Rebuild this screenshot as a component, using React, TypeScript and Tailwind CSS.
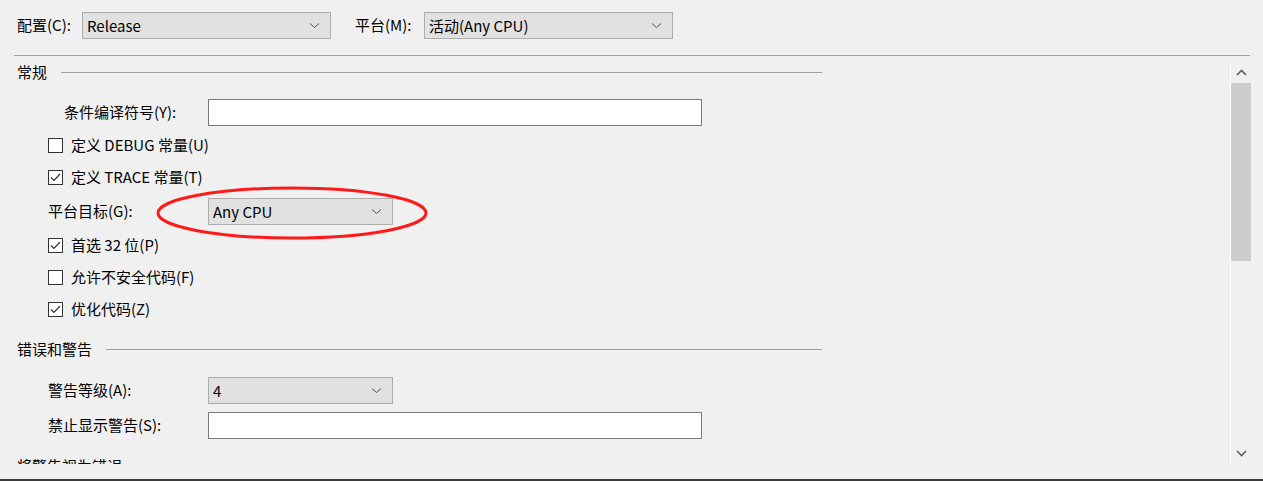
import React from "react";

const font = { fontFamily: '"Segoe UI", "Noto Sans CJK SC", sans-serif' };

const Chevron = () => (
  <svg width="11" height="7" viewBox="0 0 11 7" className="shrink-0">
    <path d="M1 1.5 L5.5 5.5 L10 1.5" fill="none" stroke="#505050" strokeWidth="1" />
  </svg>
);

const Combo = ({ value, width }: { value: string; width: string }) => (
  <div className={`${width} h-[27px] flex items-center justify-between bg-[#e1e1e1] border border-[#adadad] pl-[4px] pr-[10px]`}>
    <span className="text-[15px] text-black leading-none">{value}</span>
    <Chevron />
  </div>
);

const TextBox = () => <div className="w-[494px] h-[27px] bg-white border border-[#7a7a7a]" />;

const CheckRow = ({ label, checked }: { label: string; checked?: boolean }) => (
  <div className="h-[32px] flex items-center pl-[48px] gap-[8px]">
    <div className="w-[15px] h-[15px] bg-white border border-[#333333] flex items-center justify-center">
      {checked && (
        <svg width="11" height="9" viewBox="0 0 11 9">
          <path d="M1 4.5 L4 7.5 L10 1" fill="none" stroke="#333333" strokeWidth="1.2" />
        </svg>
      )}
    </div>
    <span className="text-[15px] text-black">{label}</span>
  </div>
);

const SectionHeader = ({ title }: { title: string }) => (
  <div className="h-[20px] flex items-center pl-[17px] w-[822px]">
    <span className="text-[15px] text-black whitespace-nowrap">{title}</span>
    <div className="flex-1 h-px bg-[#a0a0a0] ml-[14px]" />
  </div>
);

export default function App() {
  return (
    <div className="w-[1263px] h-[481px] bg-[#f0f0f0] flex flex-col overflow-hidden relative" style={font}>
      {/* top config bar */}
      <div className="flex items-center pt-[12px] pl-[17px] h-[27px] box-content">
        <span className="text-[15px] text-black w-[65px]">配置(C):</span>
        <Combo value="Release" width="w-[249px]" />
        <span className="text-[15px] text-black ml-[24px] w-[69px]">平台(M):</span>
        <Combo value="活动(Any CPU)" width="w-[249px]" />
      </div>
      <div className="ml-[14px] mt-[16px] w-[1236px] h-px bg-[#a0a0a0]" />

      <div className="flex mt-[6px] h-[402px]">
        {/* scroll content */}
        <div className="w-[1230px] h-full overflow-hidden relative flex flex-col">
          <SectionHeader title="常规" />
          <div className="mt-[17px] flex items-center">
            <span className="text-[15px] text-black pl-[64px] w-[208px]">条件编译符号(Y):</span>
            <TextBox />
          </div>
          <div className="mt-[3px]">
            <CheckRow label="定义 DEBUG 常量(U)" />
            <CheckRow label="定义 TRACE 常量(T)" checked />
          </div>
          <div className="mt-[5px] flex items-center">
            <span className="text-[15px] text-black pl-[48px] w-[208px]">平台目标(G):</span>
            <Combo value="Any CPU" width="w-[185px]" />
          </div>
          <div className="mt-[4px]">
            <CheckRow label="首选 32 位(P)" checked />
            <CheckRow label="允许不安全代码(F)" />
            <CheckRow label="优化代码(Z)" checked />
          </div>
          <div className="mt-[14px]">
            <SectionHeader title="错误和警告" />
          </div>
          <div className="mt-[18px] flex items-center">
            <span className="text-[15px] text-black pl-[48px] w-[208px]">警告等级(A):</span>
            <Combo value="4" width="w-[185px]" />
          </div>
          <div className="mt-[8px] flex items-center">
            <span className="text-[15px] text-black pl-[48px] w-[208px]">禁止显示警告(S):</span>
            <TextBox />
          </div>
          <div className="mt-[17px] h-[20px] flex items-center pl-[17px]">
            <span className="text-[15px] text-black">将警告视为错误</span>
          </div>

          {/* red annotation ellipse */}
          <svg className="absolute left-[155px] top-[124px] pointer-events-none" width="274" height="56" viewBox="0 0 274 56">
            <ellipse cx="137" cy="27" rx="134" ry="25" fill="none" stroke="#ff1a1a" strokeWidth="3" />
          </svg>
        </div>

        {/* scrollbar */}
        <div className="w-[21px] h-full border-l border-white flex flex-col items-center">
          <div className="h-[21px] w-full flex items-center justify-center">
            <svg width="11" height="7" viewBox="0 0 11 7">
              <path d="M1 6 L5.5 1.5 L10 6" fill="none" stroke="#606060" strokeWidth="1.6" />
            </svg>
          </div>
          <div className="w-full h-[178px] bg-[#cdcdcd]" />
          <div className="flex-1" />
          <div className="h-[21px] w-full flex items-center justify-center">
            <svg width="11" height="7" viewBox="0 0 11 7">
              <path d="M1 1 L5.5 5.5 L10 1" fill="none" stroke="#606060" strokeWidth="1.6" />
            </svg>
          </div>
        </div>
      </div>

      <div className="flex-1" />
      <div className="h-[2px] bg-[#3c3c3c]" />
    </div>
  );
}
